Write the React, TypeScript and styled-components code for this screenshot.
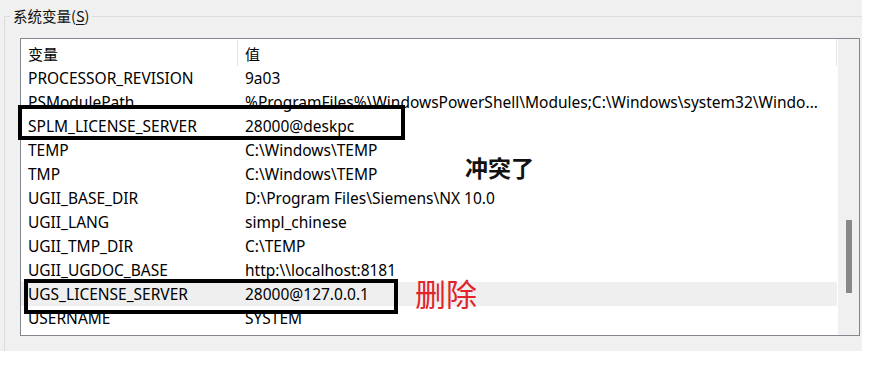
import React from 'react';
import styled, { createGlobalStyle } from 'styled-components';

const GlobalStyle = createGlobalStyle`
  html, body { margin: 0; padding: 0; background: #fff; }
  body { font-family: "Noto Sans", "Noto Sans CJK SC", sans-serif; color: #000; }
`;

interface EnvVar {
  name: string;
  value: string;
}

const vars: EnvVar[] = [
  { name: 'PROCESSOR_REVISION', value: '9a03' },
  { name: 'PSModulePath', value: '%ProgramFiles%\\WindowsPowerShell\\Modules;C:\\Windows\\system32\\Windo...' },
  { name: 'SPLM_LICENSE_SERVER', value: '28000@deskpc' },
  { name: 'TEMP', value: 'C:\\Windows\\TEMP' },
  { name: 'TMP', value: 'C:\\Windows\\TEMP' },
  { name: 'UGII_BASE_DIR', value: 'D:\\Program Files\\Siemens\\NX 10.0' },
  { name: 'UGII_LANG', value: 'simpl_chinese' },
  { name: 'UGII_TMP_DIR', value: 'C:\\TEMP' },
  { name: 'UGII_UGDOC_BASE', value: 'http:\\\\localhost:8181' },
  { name: 'UGS_LICENSE_SERVER', value: '28000@127.0.0.1' },
  { name: 'USERNAME', value: 'SYSTEM' },
];

const selectedIndex = 9;

const App: React.FunctionComponent = () => {
  return (
    <Page>
      <GlobalStyle />
      <Panel>
        <GroupBox>
          <GroupTitle>系统变量(<u>S</u>)</GroupTitle>
          <ListView>
            <Table>
              <Header>
                <HeaderCell $first>变量</HeaderCell>
                <HeaderCell>值</HeaderCell>
              </Header>
              {vars.map((v, i) => (
                <Row key={v.name} $selected={i === selectedIndex}>
                  <NameCell>{v.name}</NameCell>
                  <ValueCell>{v.value}</ValueCell>
                </Row>
              ))}
            </Table>
            <ScrollBar>
              <Thumb />
            </ScrollBar>
          </ListView>
        </GroupBox>
      </Panel>

      <MarkBox $left={18} $top={105} $width={387} $height={35} />
      <MarkBox $left={24} $top={279} $width={374} $height={35} />
      <Note>冲突了</Note>
      <DeleteNote>删除</DeleteNote>
    </Page>
  );
};

const Page = styled.div`
  position: relative;
  width: 895px;
  height: 371px;
  overflow: hidden;
  background: #fff;
`;

const Panel = styled.div`
  width: 862px;
  height: 351px;
  background: #f0f0f0;
  overflow: hidden;
  padding: 5px 0 0 4px;
  box-sizing: border-box;
`;

const GroupBox = styled.fieldset`
  margin: 0;
  padding: 0 0 0 15px;
  height: 400px;
  border: 1px solid #dcdcdc;
  border-right: none;
  border-bottom: none;
  box-sizing: border-box;
`;

const GroupTitle = styled.legend`
  margin-left: -10px;
  padding: 0 3px 0 3px;
  font-size: 14.5px;
  line-height: 22px;
  font-family: "Noto Sans CJK SC", sans-serif;
  color: #111;
  u { text-underline-offset: 2px; }
`;

const ListView = styled.div`
  display: flex;
  width: 840px;
  height: 298px;
  margin-top: 11px;
  border: 1px solid #828790;
  box-sizing: border-box;
  background: #fff;
`;

const Table = styled.div`
  width: 816px;
  display: flex;
  flex-direction: column;
`;

const Header = styled.div`
  display: flex;
  height: 27px;
  flex-shrink: 0;
  border-right: 1px solid #e5e5e5;
`;

const HeaderCell = styled.div<{ $first?: boolean }>`
  width: ${({ $first }) => ($first ? '217px' : 'auto')};
  flex: ${({ $first }) => ($first ? 'none' : '1')};
  padding-left: 7px;
  box-sizing: border-box;
  display: flex;
  align-items: center;
  font-size: 15px;
  font-family: "Noto Sans CJK SC", sans-serif;
  border-right: ${({ $first }) => ($first ? '1px solid #e5e5e5' : 'none')};
  margin: 1px 0 0;
`;

const Row = styled.div<{ $selected?: boolean }>`
  display: flex;
  height: 24px;
  flex-shrink: 0;
  align-items: center;
  background: ${({ $selected }) => ($selected ? '#efefef' : 'transparent')};
  font-size: 15.5px;
  white-space: nowrap;
`;

const NameCell = styled.div`
  width: 218px;
  padding-left: 7px;
  box-sizing: border-box;
  flex: none;
`;

const ValueCell = styled.div`
  padding-left: 6px;
  flex: 1;
  overflow: hidden;
`;

const ScrollBar = styled.div`
  width: 21px;
  margin-left: 1px;
  background: #f0f0f0;
  display: flex;
  justify-content: center;
  padding-top: 181px;
  box-sizing: border-box;
`;

const Thumb = styled.div`
  width: 6px;
  height: 73px;
  background: #888;
`;

const MarkBox = styled.div<{ $left: number; $top: number; $width: number; $height: number }>`
  position: absolute;
  left: ${({ $left }) => $left}px;
  top: ${({ $top }) => $top}px;
  width: ${({ $width }) => $width}px;
  height: ${({ $height }) => $height}px;
  border: 4.5px solid #000;
  box-sizing: border-box;
`;

const Note = styled.div`
  position: absolute;
  left: 465px;
  top: 152px;
  font-family: "Noto Sans CJK SC", serif;
  font-weight: 700;
  font-size: 23px;
  line-height: 30px;
  color: #111;
`;

const DeleteNote = styled.div`
  position: absolute;
  left: 415px;
  top: 275px;
  font-family: "Noto Sans CJK SC", serif;
  font-size: 31px;
  line-height: 36px;
  color: #e0242a;
`;

export default App;
